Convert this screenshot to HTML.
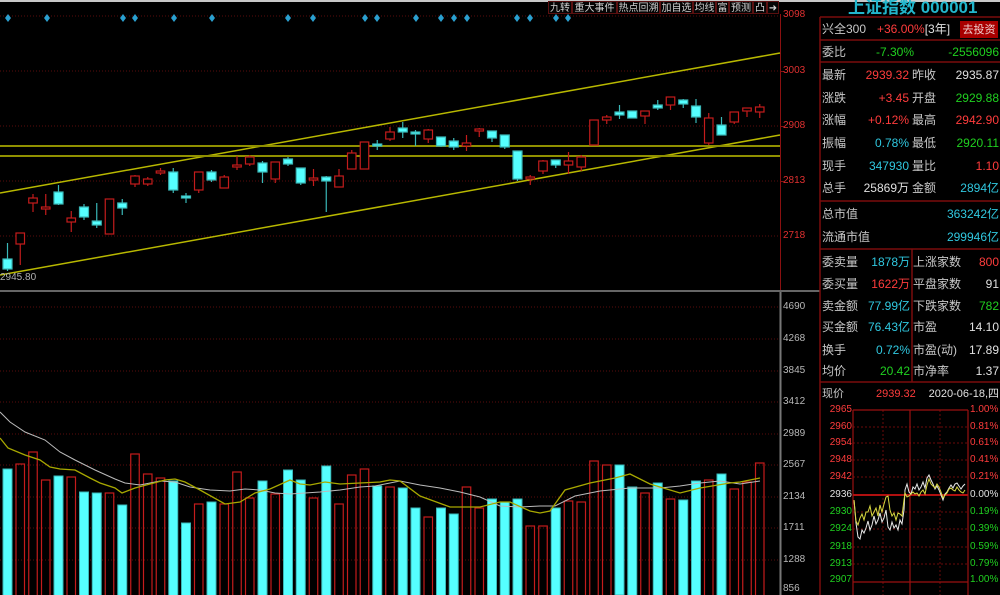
<!DOCTYPE html>
<html style="overflow:hidden;width:1000px;height:595px"><head><meta charset="utf-8"><style>
body{margin:0;background:#000;width:1000px;height:595px;overflow:hidden;position:relative;font-family:"Liberation Sans","Noto Sans CJK SC",sans-serif;}
.t{position:absolute;font-size:12px;line-height:14px;white-space:nowrap;}
.l{color:#c8c8c8;}
.r{text-align:right;}
.red{color:#ff3c3c}.grn{color:#20d020}.cy{color:#30c8e0}.wh{color:#e0e0e0}
.ax{position:absolute;font-size:10px;line-height:10px;}
.tb{position:absolute;top:1px;height:13px;font-size:10px;line-height:13px;color:#d0d0d0;border:1px solid #5a1010;box-sizing:border-box;text-align:center;background:#050505}
</style></head><body>
<svg width="1000" height="595" style="position:absolute;left:0;top:0;overflow:hidden">
<rect x="0" y="0" width="1000" height="2" fill="#c8c8c8"/>
<g stroke="#5a0c0c" stroke-dasharray="1,2" stroke-width="1">
<line x1="0" y1="16" x2="780" y2="16"/><line x1="0" y1="71" x2="780" y2="71"/><line x1="0" y1="126" x2="780" y2="126"/><line x1="0" y1="181" x2="780" y2="181"/><line x1="0" y1="236" x2="780" y2="236"/>
<line x1="0" y1="307" x2="780" y2="307"/><line x1="0" y1="339" x2="780" y2="339"/><line x1="0" y1="371" x2="780" y2="371"/><line x1="0" y1="402" x2="780" y2="402"/><line x1="0" y1="434" x2="780" y2="434"/><line x1="0" y1="465" x2="780" y2="465"/><line x1="0" y1="497" x2="780" y2="497"/><line x1="0" y1="528" x2="780" y2="528"/><line x1="0" y1="560" x2="780" y2="560"/>
</g>
<line x1="780.5" y1="14" x2="780.5" y2="290" stroke="#8a1010"/>
<line x1="780.5" y1="291" x2="780.5" y2="595" stroke="#777" stroke-width="2"/>
<line x1="0" y1="291" x2="820" y2="291" stroke="#666" stroke-width="2"/>
<g fill="#8a1010"><rect x="781" y="71" width="3" height="1"/><rect x="781" y="126" width="3" height="1"/><rect x="781" y="181" width="3" height="1"/></g>
<g fill="#2aa0d0">
<path d="M8 14l3 4l-3 4l-3-4z"/><path d="M47 14l3 4l-3 4l-3-4z"/><path d="M123 14l3 4l-3 4l-3-4z"/><path d="M135 14l3 4l-3 4l-3-4z"/><path d="M174 14l3 4l-3 4l-3-4z"/><path d="M212 14l3 4l-3 4l-3-4z"/><path d="M288 14l3 4l-3 4l-3-4z"/><path d="M313 14l3 4l-3 4l-3-4z"/><path d="M365 14l3 4l-3 4l-3-4z"/><path d="M377 14l3 4l-3 4l-3-4z"/><path d="M416 14l3 4l-3 4l-3-4z"/><path d="M441 14l3 4l-3 4l-3-4z"/><path d="M454 14l3 4l-3 4l-3-4z"/><path d="M467 14l3 4l-3 4l-3-4z"/><path d="M517 14l3 4l-3 4l-3-4z"/><path d="M530 14l3 4l-3 4l-3-4z"/><path d="M556 14l3 4l-3 4l-3-4z"/><path d="M568 14l3 4l-3 4l-3-4z"/>
</g>
<g stroke="#b8b800" stroke-width="1.5">
<line x1="0" y1="193" x2="780" y2="53"/><line x1="0" y1="275" x2="780" y2="135"/>
</g>
<g stroke="#909000" stroke-width="2"><line x1="0" y1="146" x2="780" y2="146"/><line x1="0" y1="156" x2="780" y2="156"/></g>
<g stroke-width="1.2">
<g stroke="#3ab8b8" fill="#55ffff">
<line x1="7.5" y1="243" x2="7.5" y2="271"/><rect x="3" y="259" width="9" height="10"/>
<line x1="58.5" y1="185" x2="58.5" y2="205"/><rect x="54" y="192" width="9" height="12"/>
<line x1="84" y1="204" x2="84" y2="220"/><rect x="79.5" y="207" width="9" height="10"/>
<line x1="96.75" y1="203" x2="96.75" y2="228"/><rect x="92.25" y="221" width="9" height="4"/>
<line x1="122.25" y1="199" x2="122.25" y2="215"/><rect x="117.75" y="203" width="9" height="5"/>
<line x1="173.25" y1="168" x2="173.25" y2="193"/><rect x="168.75" y="172" width="9" height="18"/>
<line x1="186" y1="193" x2="186" y2="203"/><rect x="181.5" y="196" width="9" height="2"/>
<line x1="211.5" y1="170" x2="211.5" y2="182"/><rect x="207" y="172" width="9" height="8"/>
<line x1="262.5" y1="161" x2="262.5" y2="183"/><rect x="258" y="163" width="9" height="9"/>
<line x1="288" y1="157" x2="288" y2="166"/><rect x="283.5" y="159" width="9" height="5"/>
<line x1="300.75" y1="168" x2="300.75" y2="185"/><rect x="296.25" y="168" width="9" height="15"/>
<line x1="326.25" y1="176" x2="326.25" y2="212"/><rect x="321.75" y="177" width="9" height="4"/>
<line x1="377.25" y1="140" x2="377.25" y2="150"/><rect x="372.75" y="144" width="9" height="2"/>
<line x1="402.75" y1="122" x2="402.75" y2="138"/><rect x="398.25" y="128" width="9" height="4"/>
<line x1="415.5" y1="130" x2="415.5" y2="146"/><rect x="411" y="132" width="9" height="2"/>
<line x1="441" y1="137" x2="441" y2="147"/><rect x="436.5" y="137" width="9" height="9"/>
<line x1="453.75" y1="138" x2="453.75" y2="150"/><rect x="449.25" y="141" width="9" height="6"/>
<line x1="492" y1="131" x2="492" y2="142"/><rect x="487.5" y="131" width="9" height="7"/>
<line x1="504.75" y1="135" x2="504.75" y2="149"/><rect x="500.25" y="135" width="9" height="12"/>
<line x1="517.5" y1="151" x2="517.5" y2="181"/><rect x="513" y="151" width="9" height="28"/>
<line x1="555.75" y1="160" x2="555.75" y2="168"/><rect x="551.25" y="160" width="9" height="5"/>
<line x1="619.5" y1="105" x2="619.5" y2="119"/><rect x="615" y="112" width="9" height="3"/>
<line x1="632.25" y1="111" x2="632.25" y2="118"/><rect x="627.75" y="111" width="9" height="7"/>
<line x1="657.75" y1="100" x2="657.75" y2="110"/><rect x="653.25" y="105" width="9" height="3"/>
<line x1="683.25" y1="99" x2="683.25" y2="108"/><rect x="678.75" y="100" width="9" height="4"/>
<line x1="696" y1="99" x2="696" y2="123"/><rect x="691.5" y="106" width="9" height="11"/>
<line x1="721.5" y1="117" x2="721.5" y2="135"/><rect x="717" y="125" width="9" height="10"/>
</g>
<g stroke="#c41c1c" fill="none">
<line x1="20.25" y1="233" x2="20.25" y2="265"/><rect x="16" y="233" width="8.5" height="11" fill="#000"/>
<line x1="33" y1="194" x2="33" y2="212"/><rect x="28.75" y="198" width="8.5" height="5" fill="#000"/>
<line x1="45.75" y1="194" x2="45.75" y2="215"/><rect x="41.5" y="207" width="8.5" height="2" fill="#000"/>
<line x1="71.25" y1="211" x2="71.25" y2="232"/><rect x="67" y="218" width="8.5" height="4" fill="#000"/>
<line x1="109.5" y1="199" x2="109.5" y2="234"/><rect x="105.25" y="199" width="8.5" height="35" fill="#000"/>
<line x1="135" y1="175" x2="135" y2="187"/><rect x="130.75" y="176" width="8.5" height="8" fill="#000"/>
<line x1="147.75" y1="177" x2="147.75" y2="186"/><rect x="143.5" y="179" width="8.5" height="5" fill="#000"/>
<line x1="160.5" y1="168" x2="160.5" y2="175"/><rect x="156.25" y="171" width="8.5" height="2" fill="#000"/>
<line x1="198.75" y1="172" x2="198.75" y2="193"/><rect x="194.5" y="172" width="8.5" height="18" fill="#000"/>
<line x1="224.25" y1="175" x2="224.25" y2="188"/><rect x="220" y="177" width="8.5" height="11" fill="#000"/>
<line x1="237" y1="156" x2="237" y2="170"/><rect x="232.75" y="165" width="8.5" height="2" fill="#000"/>
<line x1="249.75" y1="155" x2="249.75" y2="166"/><rect x="245.5" y="157" width="8.5" height="7" fill="#000"/>
<line x1="275.25" y1="162" x2="275.25" y2="183"/><rect x="271" y="162" width="8.5" height="17" fill="#000"/>
<line x1="313.5" y1="169" x2="313.5" y2="186"/><rect x="309.25" y="178" width="8.5" height="2" fill="#000"/>
<line x1="339" y1="169" x2="339" y2="187"/><rect x="334.75" y="176" width="8.5" height="11" fill="#000"/>
<line x1="351.75" y1="150" x2="351.75" y2="169"/><rect x="347.5" y="153" width="8.5" height="16" fill="#000"/>
<line x1="364.5" y1="142" x2="364.5" y2="169"/><rect x="360.25" y="142" width="8.5" height="27" fill="#000"/>
<line x1="390" y1="127" x2="390" y2="141"/><rect x="385.75" y="132" width="8.5" height="7" fill="#000"/>
<line x1="428.25" y1="129" x2="428.25" y2="143"/><rect x="424" y="130" width="8.5" height="9" fill="#000"/>
<line x1="466.5" y1="135" x2="466.5" y2="151"/><rect x="462.25" y="143" width="8.5" height="3" fill="#000"/>
<line x1="479.25" y1="128" x2="479.25" y2="137"/><rect x="475" y="129" width="8.5" height="2" fill="#000"/>
<line x1="530.25" y1="175" x2="530.25" y2="185"/><rect x="526" y="177" width="8.5" height="2" fill="#000"/>
<line x1="543" y1="160" x2="543" y2="174"/><rect x="538.75" y="161" width="8.5" height="10" fill="#000"/>
<line x1="568.5" y1="152" x2="568.5" y2="174"/><rect x="564.25" y="161" width="8.5" height="4" fill="#000"/>
<line x1="581.25" y1="155" x2="581.25" y2="171"/><rect x="577" y="157" width="8.5" height="10" fill="#000"/>
<line x1="594" y1="120" x2="594" y2="145"/><rect x="589.75" y="120" width="8.5" height="25" fill="#000"/>
<line x1="606.75" y1="115" x2="606.75" y2="124"/><rect x="602.5" y="117" width="8.5" height="3" fill="#000"/>
<line x1="645" y1="111" x2="645" y2="124"/><rect x="640.75" y="111" width="8.5" height="5" fill="#000"/>
<line x1="670.5" y1="97" x2="670.5" y2="110"/><rect x="666.25" y="97" width="8.5" height="8" fill="#000"/>
<line x1="708.75" y1="113" x2="708.75" y2="145"/><rect x="704.5" y="118" width="8.5" height="25" fill="#000"/>
<line x1="734.25" y1="112" x2="734.25" y2="124"/><rect x="730" y="112" width="8.5" height="10" fill="#000"/>
<line x1="747" y1="108" x2="747" y2="117"/><rect x="742.75" y="108" width="8.5" height="3" fill="#000"/>
<line x1="759.75" y1="104" x2="759.75" y2="118"/><rect x="755.5" y="107" width="8.5" height="5" fill="#000"/>
</g>
</g>
<g stroke="#3ab8b8" fill="#55ffff" stroke-width="1">
<rect x="3" y="469" width="9" height="130"/><rect x="54" y="476" width="9" height="130"/><rect x="79.5" y="492" width="9" height="130"/><rect x="92.25" y="493" width="9" height="130"/><rect x="117.75" y="505" width="9" height="130"/><rect x="168.75" y="481" width="9" height="130"/><rect x="181.5" y="523" width="9" height="130"/><rect x="207" y="502" width="9" height="130"/><rect x="258" y="481" width="9" height="130"/><rect x="283.5" y="470" width="9" height="130"/><rect x="296.25" y="480" width="9" height="130"/><rect x="321.75" y="466" width="9" height="130"/><rect x="372.75" y="486" width="9" height="130"/><rect x="398.25" y="488" width="9" height="130"/><rect x="411" y="508" width="9" height="130"/><rect x="436.5" y="508" width="9" height="130"/><rect x="449.25" y="514" width="9" height="130"/><rect x="487.5" y="499" width="9" height="130"/><rect x="500.25" y="502" width="9" height="130"/><rect x="513" y="499" width="9" height="130"/><rect x="551.25" y="508" width="9" height="130"/><rect x="615" y="465" width="9" height="130"/><rect x="627.75" y="487" width="9" height="130"/><rect x="653.25" y="483" width="9" height="130"/><rect x="678.75" y="500" width="9" height="130"/><rect x="691.5" y="481" width="9" height="130"/><rect x="717" y="474" width="9" height="130"/>
</g>
<g stroke="#c41c1c" fill="none" stroke-width="1.2">
<rect x="16" y="464" width="8.5" height="140"/><rect x="28.75" y="452" width="8.5" height="150"/><rect x="41.5" y="480" width="8.5" height="130"/><rect x="67" y="477" width="8.5" height="130"/><rect x="105.25" y="493" width="8.5" height="130"/><rect x="130.75" y="454" width="8.5" height="150"/><rect x="143.5" y="474" width="8.5" height="130"/><rect x="156.25" y="478" width="8.5" height="130"/><rect x="194.5" y="504" width="8.5" height="130"/><rect x="220" y="504" width="8.5" height="130"/><rect x="232.75" y="472" width="8.5" height="130"/><rect x="245.5" y="498" width="8.5" height="130"/><rect x="271" y="494" width="8.5" height="130"/><rect x="309.25" y="498" width="8.5" height="130"/><rect x="334.75" y="504" width="8.5" height="130"/><rect x="347.5" y="475" width="8.5" height="130"/><rect x="360.25" y="469" width="8.5" height="130"/><rect x="385.75" y="487" width="8.5" height="130"/><rect x="424" y="517" width="8.5" height="130"/><rect x="462.25" y="487" width="8.5" height="130"/><rect x="475" y="508" width="8.5" height="130"/><rect x="526" y="526" width="8.5" height="130"/><rect x="538.75" y="526" width="8.5" height="130"/><rect x="564.25" y="501" width="8.5" height="130"/><rect x="577" y="502" width="8.5" height="130"/><rect x="589.75" y="461" width="8.5" height="140"/><rect x="602.5" y="465" width="8.5" height="140"/><rect x="640.75" y="493" width="8.5" height="130"/><rect x="666.25" y="499" width="8.5" height="130"/><rect x="704.5" y="480" width="8.5" height="130"/><rect x="730" y="489" width="8.5" height="130"/><rect x="742.75" y="482" width="8.5" height="130"/><rect x="755.5" y="463" width="8.5" height="140"/>
</g>
<polyline fill="none" stroke="#bbbbbb" stroke-width="1" points="0,412 10,422 25,432 45,440 60,452 75,460 95,470 115,479 125,483 140,485 150,483 160,481 175,482 190,487 210,490 230,491 245,489 260,490 275,493 290,494 305,493 320,492 340,490 360,487 375,486 390,483 400,481 420,485 440,488 460,492 480,497 500,506 520,507 540,506 555,506 575,496 600,491 630,488 660,488 680,486 700,483 720,481 740,484 760,481"/>
<polyline fill="none" stroke="#a8a800" stroke-width="1.3" points="0,438 8,448 25,455 40,460 50,467 60,469 75,470 90,478 100,483 115,488 122,493 135,488 150,484 165,480 175,479 185,482 200,490 225,504 240,502 255,493 270,489 290,480 300,484 310,485 325,482 340,484 360,483 380,482 390,480 400,481 420,496 450,507 480,507 500,502 510,502 530,511 540,513 550,511 565,490 590,483 615,478 630,474 650,484 680,493 700,488 730,483 740,482 760,478"/>
<g stroke="#7a0c0c" stroke-width="1.5">
<line x1="820" y1="17" x2="820" y2="595"/><line x1="820" y1="17" x2="1000" y2="17"/><line x1="820" y1="40" x2="1000" y2="40"/><line x1="820" y1="62" x2="1000" y2="62"/><line x1="820" y1="201" x2="1000" y2="201"/><line x1="820" y1="249" x2="1000" y2="249"/><line x1="820" y1="382" x2="1000" y2="382"/><line x1="912" y1="249" x2="912" y2="382"/>
</g>
<g stroke="#6a0a0a" stroke-width="1" stroke-dasharray="2,2">
<line x1="853" y1="427" x2="968" y2="427"/><line x1="853" y1="443" x2="968" y2="443"/><line x1="853" y1="460" x2="968" y2="460"/><line x1="853" y1="477" x2="968" y2="477"/><line x1="853" y1="512" x2="968" y2="512"/><line x1="853" y1="529" x2="968" y2="529"/><line x1="853" y1="547" x2="968" y2="547"/><line x1="853" y1="564" x2="968" y2="564"/><line x1="883" y1="410" x2="883" y2="595"/><line x1="940" y1="410" x2="940" y2="595"/>
</g>
<g stroke="#9a1010" stroke-width="1.2">
<line x1="853" y1="410" x2="968" y2="410"/><line x1="853" y1="582" x2="968" y2="582"/><line x1="853" y1="410" x2="853" y2="595"/><line x1="910" y1="410" x2="910" y2="595"/><line x1="968" y1="410" x2="968" y2="595"/>
</g>
<line x1="853" y1="495" x2="968" y2="495" stroke="#b01010" stroke-width="2"/>
<polyline fill="none" stroke="#e8e8e8" stroke-width="1" points="854,500 856,523 858,537 860,539 862,530 864,533 866,528 868,521 870,530 872,525 874,516 876,524 878,520 880,513 882,522 884,518 886,510 888,527 890,530 892,522 894,528 896,525 898,530 900,520 902,524 904,510 905,490 907,484 909,492 911,494 913,487 915,489 917,484 919,490 921,487 923,482 925,488 927,478 929,475 931,480 933,484 935,489 937,486 939,490 941,495 943,500 945,494 947,492 949,488 951,485 953,488 955,484 957,483 959,486 961,489 963,486 965,484"/>
<polyline fill="none" stroke="#d8d840" stroke-width="1" points="854,500 856,521 858,525 860,518 862,514 864,520 866,512 868,512 870,506 872,516 874,512 876,508 878,516 880,505 882,512 884,504 886,497 888,496 890,510 892,516 894,513 896,520 898,513 900,514 902,516 904,500 905,493 907,497 909,496 911,494 913,492 915,494 917,493 919,496 921,492 923,490 925,494 927,485 929,479 931,484 933,486 935,488 937,484 939,487 941,492 943,498 945,495 947,493 949,489 951,488 953,490 955,491 957,487 959,490 961,492 963,493 965,490"/>
<rect x="960" y="21" width="38" height="17" fill="#a80000"/>
</svg>

<div class="tb" style="left:548px;width:24px">九转</div>
<div class="tb" style="left:572px;width:45px">重大事件</div>
<div class="tb" style="left:617px;width:43px">热点回溯</div>
<div class="tb" style="left:660px;width:33px">加自选</div>
<div class="tb" style="left:693px;width:23px">均线</div>
<div class="tb" style="left:716px;width:13px">富</div>
<div class="tb" style="left:729px;width:24px">预测</div>
<div class="tb" style="left:753px;width:14px">凸</div>
<div class="tb" style="left:767px;width:12px">➜</div>

<div class="ax" style="left:783px;top:10px;color:#e03030">3098</div>
<div class="ax" style="left:783px;top:66px;color:#e03030">3003</div>
<div class="ax" style="left:783px;top:121px;color:#e03030">2908</div>
<div class="ax" style="left:783px;top:176px;color:#e03030">2813</div>
<div class="ax" style="left:783px;top:231px;color:#e03030">2718</div>
<div class="ax" style="left:0px;top:273px;color:#b0b0b0">2945.80</div>
<div class="ax" style="left:783px;top:302px;color:#b8b8b8">4690</div>
<div class="ax" style="left:783px;top:334px;color:#b8b8b8">4268</div>
<div class="ax" style="left:783px;top:366px;color:#b8b8b8">3845</div>
<div class="ax" style="left:783px;top:397px;color:#b8b8b8">3412</div>
<div class="ax" style="left:783px;top:429px;color:#b8b8b8">2989</div>
<div class="ax" style="left:783px;top:460px;color:#b8b8b8">2567</div>
<div class="ax" style="left:783px;top:492px;color:#b8b8b8">2134</div>
<div class="ax" style="left:783px;top:523px;color:#b8b8b8">1711</div>
<div class="ax" style="left:783px;top:555px;color:#b8b8b8">1288</div>
<div class="ax" style="left:783px;top:584px;color:#b8b8b8">856</div>

<div class="t cy" style="left:848px;top:-2px;font-size:17px;line-height:20px;font-weight:bold;color:#22b6cc">上证指数 000001</div>
<div class="t l" style="left:822px;top:22px">兴全300</div>
<div class="t red" style="left:877px;top:22px">+36.00%<span class="wh">[3年]</span></div>
<div class="t" style="left:960px;top:23px;width:38px;text-align:center;color:#f0d0d0;font-size:11px">去投资</div>
<div class="t l" style="left:822px;top:45px">委比</div>
<div class="t grn" style="left:876px;top:45px">-7.30%</div>
<div class="t grn r" style="right:1px;top:45px">-2556096</div>

<div class="t l" style="left:822px;top:68px">最新</div><div class="t red r" style="right:91px;top:68px">2939.32</div><div class="t l" style="left:912px;top:68px">昨收</div><div class="t wh r" style="right:1px;top:68px">2935.87</div>
<div class="t l" style="left:822px;top:91px">涨跌</div><div class="t red r" style="right:91px;top:91px">+3.45</div><div class="t l" style="left:912px;top:91px">开盘</div><div class="t grn r" style="right:1px;top:91px">2929.88</div>
<div class="t l" style="left:822px;top:113px">涨幅</div><div class="t red r" style="right:91px;top:113px">+0.12%</div><div class="t l" style="left:912px;top:113px">最高</div><div class="t red r" style="right:1px;top:113px">2942.90</div>
<div class="t l" style="left:822px;top:136px">振幅</div><div class="t cy r" style="right:91px;top:136px">0.78%</div><div class="t l" style="left:912px;top:136px">最低</div><div class="t grn r" style="right:1px;top:136px">2920.11</div>
<div class="t l" style="left:822px;top:159px">现手</div><div class="t cy r" style="right:91px;top:159px">347930</div><div class="t l" style="left:912px;top:159px">量比</div><div class="t red r" style="right:1px;top:159px">1.10</div>
<div class="t l" style="left:822px;top:181px">总手</div><div class="t wh r" style="right:91px;top:181px">25869万</div><div class="t l" style="left:912px;top:181px">金额</div><div class="t cy r" style="right:1px;top:181px">2894亿</div>

<div class="t l" style="left:822px;top:207px">总市值</div><div class="t cy r" style="right:1px;top:207px">363242亿</div>
<div class="t l" style="left:822px;top:230px">流通市值</div><div class="t cy r" style="right:1px;top:230px">299946亿</div>

<div class="t l" style="left:822px;top:255px">委卖量</div><div class="t cy r" style="right:90px;top:255px">1878万</div><div class="t l" style="left:913px;top:255px">上涨家数</div><div class="t red r" style="right:1px;top:255px">800</div>
<div class="t l" style="left:822px;top:277px">委买量</div><div class="t red r" style="right:90px;top:277px">1622万</div><div class="t l" style="left:913px;top:277px">平盘家数</div><div class="t wh r" style="right:1px;top:277px">91</div>
<div class="t l" style="left:822px;top:299px">卖金额</div><div class="t cy r" style="right:90px;top:299px">77.99亿</div><div class="t l" style="left:913px;top:299px">下跌家数</div><div class="t grn r" style="right:1px;top:299px">782</div>
<div class="t l" style="left:822px;top:320px">买金额</div><div class="t cy r" style="right:90px;top:320px">76.43亿</div><div class="t l" style="left:913px;top:320px">市盈</div><div class="t wh r" style="right:1px;top:320px">14.10</div>
<div class="t l" style="left:822px;top:343px">换手</div><div class="t cy r" style="right:90px;top:343px">0.72%</div><div class="t l" style="left:913px;top:343px">市盈(动)</div><div class="t wh r" style="right:1px;top:343px">17.89</div>
<div class="t l" style="left:822px;top:364px">均价</div><div class="t grn r" style="right:90px;top:364px">20.42</div><div class="t l" style="left:913px;top:364px">市净率</div><div class="t wh r" style="right:1px;top:364px">1.37</div>

<div class="t l" style="left:822px;top:387px;font-size:11px">现价</div><div class="t red" style="left:876px;top:387px;font-size:11px">2939.32</div><div class="t wh r" style="right:1px;top:387px;font-size:11px">2020-06-18,四</div>

<div class="ax red r" style="right:148px;top:405px">2965</div><div class="ax red" style="left:970px;top:405px">1.00%</div>
<div class="ax red r" style="right:148px;top:422px">2960</div><div class="ax red" style="left:970px;top:422px">0.81%</div>
<div class="ax red r" style="right:148px;top:438px">2954</div><div class="ax red" style="left:970px;top:438px">0.61%</div>
<div class="ax red r" style="right:148px;top:455px">2948</div><div class="ax red" style="left:970px;top:455px">0.41%</div>
<div class="ax red r" style="right:148px;top:472px">2942</div><div class="ax red" style="left:970px;top:472px">0.21%</div>
<div class="ax wh r" style="right:148px;top:490px">2936</div><div class="ax wh" style="left:970px;top:490px">0.00%</div>
<div class="ax grn r" style="right:148px;top:507px">2930</div><div class="ax grn" style="left:970px;top:507px">0.19%</div>
<div class="ax grn r" style="right:148px;top:524px">2924</div><div class="ax grn" style="left:970px;top:524px">0.39%</div>
<div class="ax grn r" style="right:148px;top:542px">2918</div><div class="ax grn" style="left:970px;top:542px">0.59%</div>
<div class="ax grn r" style="right:148px;top:559px">2913</div><div class="ax grn" style="left:970px;top:559px">0.79%</div>
<div class="ax grn r" style="right:148px;top:575px">2907</div><div class="ax grn" style="left:970px;top:575px">1.00%</div>
</body></html>
